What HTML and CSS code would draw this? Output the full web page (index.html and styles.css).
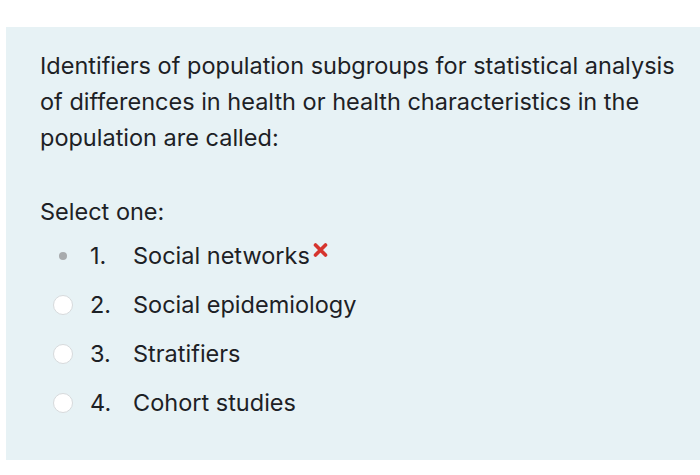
FILE: index.html
```html
<!DOCTYPE html>
<html>
<head>
<meta charset="utf-8">
<link rel="stylesheet" href="styles.css">
</head>
<body>
<div class="page">
  <div class="panel">
    <div class="qtext">Identifiers of population subgroups for statistical analysis of differences in health or health characteristics in the population are called:</div>
    <div class="prompt">Select one:</div>
    <div class="answers">
      <div class="opt">
        <span class="radio disabled-checked"><span class="dot"></span></span>
        <span class="num">1.</span>
        <span class="label">Social networks</span>
        <svg class="cross" width="15" height="14" viewBox="0 0 15 14"><path d="M2.5 2 L12.5 12 M12.5 2 L2.5 12" stroke="#d6352e" stroke-width="3.6" stroke-linecap="round"/></svg>
      </div>
      <div class="opt">
        <span class="radio"></span>
        <span class="num">2.</span>
        <span class="label">Social epidemiology</span>
      </div>
      <div class="opt">
        <span class="radio"></span>
        <span class="num">3.</span>
        <span class="label">Stratifiers</span>
      </div>
      <div class="opt">
        <span class="radio"></span>
        <span class="num">4.</span>
        <span class="label">Cohort studies</span>
      </div>
    </div>
  </div>
</div>
</body>
</html>
```
FILE: styles.css
```css
html, body {
  margin: 0;
  padding: 0;
  background: #ffffff;
}
body {
  font-family: Inter, "Noto Sans", "Liberation Sans", sans-serif;
  color: #1d2125;
}
.page {
  padding-top: 27px;
  padding-left: 6px;
  height: 475px;
  box-sizing: border-box;
}
.panel {
  background: #e7f2f5;
  height: 433px;
  box-sizing: border-box;
  padding: 21px 18px 0 34px;
}
.qtext {
  font-size: 23.5px;
  line-height: 36px;
}
.prompt {
  font-size: 23.5px;
  line-height: 36px;
  margin-top: 38px;
}
.answers {
  margin-top: 1px;
  display: flex;
  flex-direction: column;
}
.opt {
  display: flex;
  align-items: center;
  height: 49px;
  font-size: 23.5px;
}
.radio {
  width: 20px;
  height: 20px;
  border-radius: 50%;
  background: #ffffff;
  border: 1px solid #d7dadc;
  box-sizing: border-box;
  margin-left: 13px;
  margin-right: 17px;
  display: flex;
  align-items: center;
  justify-content: center;
}
.radio.disabled-checked {
  background: transparent;
  border-color: transparent;
}
.dot {
  width: 8px;
  height: 8px;
  border-radius: 50%;
  background: #a8abad;
}
.num {
  width: 43px;
}
.cross {
  margin-left: 3px;
  margin-top: -12px;
}
```
